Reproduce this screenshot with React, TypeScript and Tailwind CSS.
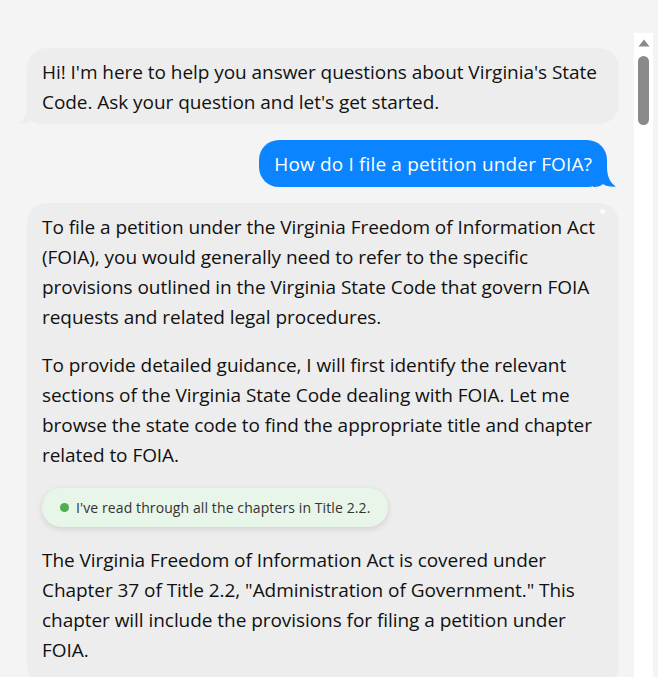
import React from "react";

const Tail = ({ side, color }: { side: "left" | "right"; color: string }) => (
  <svg
    width="24"
    height="20"
    viewBox="0 0 24 20"
    className={`absolute bottom-0 ${side === "right" ? "right-[-10px]" : "left-[-10px] -scale-x-100"}`}
  >
    <path d="M0 0 H14 C14 9 17 16 23 19.6 C18 20.2 13 19 10 17 C8 19 5 20 0 20 Z" fill={color} />
  </svg>
);

const Chip = ({ text }: { text: string }) => (
  <div className="inline-flex items-center gap-[7px] h-[39px] pl-[18px] pr-[18px] rounded-full bg-[#e8f5e9] shadow-[0_2px_6px_rgba(0,0,0,0.12)] text-[14px] tracking-[0.1px] text-[#333]">
    <span className="w-[9px] h-[9px] rounded-full bg-[#4caf50]" />
    <span>{text}</span>
  </div>
);

export default function App() {
  return (
    <div className="h-[677px] w-[658px] bg-[#f4f4f4] flex flex-col overflow-hidden font-['Open_Sans',sans-serif] text-[19px] tracking-[-0.05px] leading-[30px] text-[#111]">
      <div className="h-[33px] shrink-0" />
      <div className="flex flex-1 min-h-0 pr-[5px]">
        <div className="flex-1 min-w-0 overflow-hidden px-[15px] pt-[15px] flex flex-col gap-4">
          {/* welcome */}
          <div className="relative ml-[12px] self-stretch rounded-[20px] bg-[#ededed] px-[15px] pt-[9px] pb-[7px]">
            <p>Hi! I'm here to help you answer questions about Virginia's State Code. Ask your question and let's get started.</p>
            <Tail side="left" color="#ededed" />
          </div>

          {/* user */}
          <div className="relative self-end mr-[12px] rounded-[20px] bg-[#0a84ff] text-white tracking-[0.15px] px-[15px] pt-[9px] pb-[8px]">
            <p>How do I file a petition under FOIA?</p>
            <Tail side="right" color="#0a84ff" />
          </div>

          {/* answer */}
          <div className="relative ml-[12px] rounded-[20px] bg-[#ededed] px-[15px] pt-[9px] pb-[20px] flex flex-col gap-[18px] items-start">
            <span className="absolute top-[6px] right-[14px] w-[5px] h-[5px] rounded-full bg-[#fafafa]" />
            <p>
              To file a petition under the Virginia Freedom of Information Act (FOIA), you would generally need to
              refer to the specific provisions outlined in the Virginia State Code that govern FOIA requests and
              related legal procedures.
            </p>
            <p>
              To provide detailed guidance, I will first identify the relevant sections of the Virginia State Code
              dealing with FOIA. Let me browse the state code to find the appropriate title and chapter related to
              FOIA.
            </p>
            <Chip text="I've read through all the chapters in Title 2.2." />
            <p>
              The Virginia Freedom of Information Act is covered under Chapter 37 of Title 2.2, "Administration of
              Government." This chapter will include the provisions for filing a petition under FOIA.
            </p>
          </div>
        </div>

        {/* scrollbar */}
        <div className="w-[19px] shrink-0 bg-white flex flex-col items-center pt-[6px]">
          <svg width="12" height="8" viewBox="0 0 12 8">
            <path d="M6 0.5 L11.5 7.5 H0.5 Z" fill="#8a8a8a" />
          </svg>
          <div className="mt-[9px] w-[11px] h-[69px] rounded-full bg-[#8a8a8a]" />
        </div>
      </div>
    </div>
  );
}
